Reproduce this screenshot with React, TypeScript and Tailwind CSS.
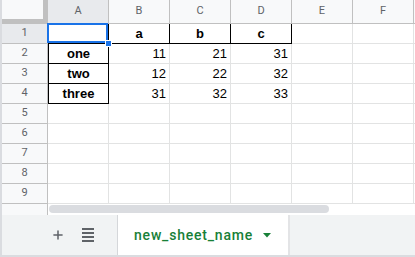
import { Plus } from 'lucide-react';

type CellSpec = {
  text?: string;
  align?: 'left' | 'center' | 'right';
  bold?: boolean;
  bl?: boolean; // black left edge
  br?: boolean; // black right edge
  bb?: boolean; // black bottom edge
  selected?: boolean;
};

// last column is only partly visible at the right edge, so no letter
const COLS = ['A', 'B', 'C', 'D', 'E', 'F', ''];

const rows: CellSpec[][] = [
  [
    { selected: true, br: true, bb: true },
    { text: 'a', align: 'center', bold: true, br: true, bb: true },
    { text: 'b', align: 'center', bold: true, br: true, bb: true },
    { text: 'c', align: 'center', bold: true, br: true, bb: true },
  ],
  [
    { text: 'one', align: 'center', bold: true, bl: true, br: true, bb: true },
    { text: '11', align: 'right' },
    { text: '21', align: 'right' },
    { text: '31', align: 'right' },
  ],
  [
    { text: 'two', align: 'center', bold: true, bl: true, br: true, bb: true },
    { text: '12', align: 'right' },
    { text: '22', align: 'right' },
    { text: '32', align: 'right' },
  ],
  [
    { text: 'three', align: 'center', bold: true, bl: true, br: true, bb: true },
    { text: '31', align: 'right' },
    { text: '32', align: 'right' },
    { text: '33', align: 'right' },
  ],
  [], [], [], [], [],
];

function Cell({ spec }: { spec: CellSpec }) {
  const justify =
    spec.align === 'center' ? 'justify-center' : spec.align === 'right' ? 'justify-end pr-[3px]' : 'justify-start pl-[3px]';
  return (
    <div
      className={`relative flex shrink-0 items-end w-[61px] h-[20px] pb-[1px] border-r border-b border-[#e2e3e3] text-[13px] leading-[16px] text-black ${justify} ${
        spec.bl ? 'border-l border-l-black' : ''
      } ${spec.br ? 'border-r-black' : ''} ${spec.bb ? 'border-b-black' : ''} ${spec.bold ? 'font-bold' : ''}`}
    >
      {spec.text}
      {spec.selected && (
        <>
          <div className="absolute -top-px -left-px w-[61px] h-[20px] border-2 border-[#1a73e8]" />
          <div className="absolute -right-[4px] -bottom-[4px] w-[7px] h-[7px] bg-[#1a73e8] border border-white z-10" />
        </>
      )}
    </div>
  );
}

export default function App() {
  return (
    <div
      className="flex w-[415px] h-[257px] overflow-hidden bg-[#dadce0] pl-[2px]"
      style={{ fontFamily: '"Liberation Sans", Arial, sans-serif' }}
    >
      <div className="flex flex-col flex-1 min-w-0 bg-white">
        {/* column headers */}
        <div className="flex h-[24px] shrink-0">
          <div className="w-[46px] shrink-0 h-[24px] bg-[#f8f9fa] border-r-[5px] border-b-[5px] border-[#c0c0c0]" />
          {COLS.map((c, i) => (
            <div
              key={i}
              className={`flex shrink-0 items-center justify-center w-[61px] h-[24px] border-r border-b border-[#c0c0c0] text-[11px] text-[#5f6368] ${
                i === 0 ? 'bg-[#e8eaed]' : 'bg-[#f8f9fa]'
              }`}
              style={{ fontFamily: 'Roboto, Arial, sans-serif' }}
            >
              {c}
            </div>
          ))}
        </div>

        {/* rows */}
        {rows.map((r, ri) => (
          <div key={ri} className="flex h-[20px] shrink-0">
            <div
              className={`flex shrink-0 items-center justify-center w-[46px] h-[20px] border-r border-b border-[#c0c0c0] text-[11px] text-[#5f6368] ${
                ri === 0 ? 'bg-[#e8eaed]' : 'bg-[#f8f9fa]'
              }`}
              style={{ fontFamily: 'Roboto, Arial, sans-serif' }}
            >
              {ri + 1}
            </div>
            {COLS.map((_, ci) => (
              <Cell key={ci} spec={r[ci] ?? {}} />
            ))}
          </div>
        ))}

        {/* horizontal scrollbar */}
        <div className="flex h-[11px] shrink-0">
          <div className="w-[46px] shrink-0 bg-[#f8f9fa] border-r border-[#c0c0c0]" />
          <div className="flex-1 pl-[1px] pt-[1px]">
            <div className="w-[280px] h-[8px] rounded-full bg-[#dadce0]" />
          </div>
        </div>

        {/* sheet tabs bar */}
        <div className="flex h-[40px] shrink-0 items-stretch bg-[#f1f3f4]">
          <div className="flex items-center w-[115px] shrink-0 pl-[49px]">
            <Plus className="w-[14px] h-[14px] text-[#5f6368]" strokeWidth={2.6} />
            <div className="ml-[17px] flex flex-col gap-[2px] w-[12px]">
              <div className="h-[2px] bg-[#5f6368]" />
              <div className="h-[2px] bg-[#5f6368]" />
              <div className="h-[2px] bg-[#5f6368]" />
              <div className="h-[2px] bg-[#5f6368]" />
            </div>
          </div>
          <div className="flex items-center w-[171px] shrink-0 bg-white border-l border-[#d5d7da] shadow-[2px_0_0_#e3e4e6] pl-[16px]">
            <span
              className="text-[14px] font-medium text-[#188038] tracking-[0.8px]"
              style={{ fontFamily: 'Roboto, Arial, sans-serif' }}
            >
              new_sheet_name
            </span>
            <svg className="ml-[10px]" width="8" height="5" viewBox="0 0 8 5">
              <path d="M0 0h8L4 4.5z" fill="#188038" />
            </svg>
          </div>
        </div>
        <div className="flex-1 bg-[#dadce0]" />
      </div>
    </div>
  );
}
